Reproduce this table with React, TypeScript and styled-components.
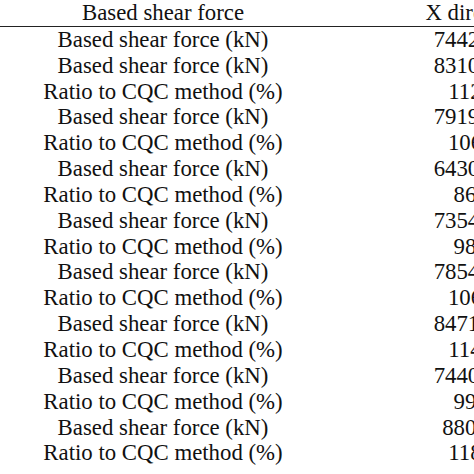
import { Fragment } from 'react';
import styled, { createGlobalStyle } from 'styled-components';

type Row = {
	label: string;
	value: string;
};

const rows: Row[] = [
	{ label: 'Based shear force (kN)', value: '7442.6' },
	{ label: 'Based shear force (kN)', value: '8310.4' },
	{ label: 'Ratio to CQC method (%)', value: '112' },
	{ label: 'Based shear force (kN)', value: '7919.2' },
	{ label: 'Ratio to CQC method (%)', value: '106' },
	{ label: 'Based shear force (kN)', value: '6430.8' },
	{ label: 'Ratio to CQC method (%)', value: '86' },
	{ label: 'Based shear force (kN)', value: '7354.1' },
	{ label: 'Ratio to CQC method (%)', value: '98' },
	{ label: 'Based shear force (kN)', value: '7854.3' },
	{ label: 'Ratio to CQC method (%)', value: '106' },
	{ label: 'Based shear force (kN)', value: '8471.5' },
	{ label: 'Ratio to CQC method (%)', value: '114' },
	{ label: 'Based shear force (kN)', value: '7440.9' },
	{ label: 'Ratio to CQC method (%)', value: '99' },
	{ label: 'Based shear force (kN)', value: '8807' },
	{ label: 'Ratio to CQC method (%)', value: '118' },
];

const GlobalStyle = createGlobalStyle`
	html, body {
		margin: 0;
		padding: 0;
		background: #ffffff;
		overflow: hidden;
	}
	body {
		width: 474px;
		height: 474px;
		color: #111111;
	}
`;

const TableWrapper = styled.div`
	width: 474px;
	height: 474px;
	overflow: hidden;
`;

const Grid = styled.div`
	display: grid;
	grid-template-columns: 326px 278px;
	width: 604px;
	font-family: 'Liberation Serif', 'DejaVu Serif', 'Times New Roman', serif;
	font-size: 22.8px;
	line-height: 25.85px;
	color: #111111;
`;

const HeaderCell = styled.div<{ $shift?: number }>`
	text-align: center;
	white-space: nowrap;
	border-bottom: 1px solid #222222;
	padding-left: ${(p) => (p.$shift ? `${p.$shift}px` : '0')};
`;

const Cell = styled.div`
	text-align: center;
	white-space: nowrap;
`;

const App = () => {
	return (
		<>
			<GlobalStyle />
			<TableWrapper>
				<Grid>
					<HeaderCell>Based shear force</HeaderCell>
					<HeaderCell $shift={24}>X direction</HeaderCell>
					{rows.map((row, i) => (
						<Fragment key={i}>
							<Cell>{row.label}</Cell>
							<Cell>{row.value}</Cell>
						</Fragment>
					))}
				</Grid>
			</TableWrapper>
		</>
	);
};

export default App;
